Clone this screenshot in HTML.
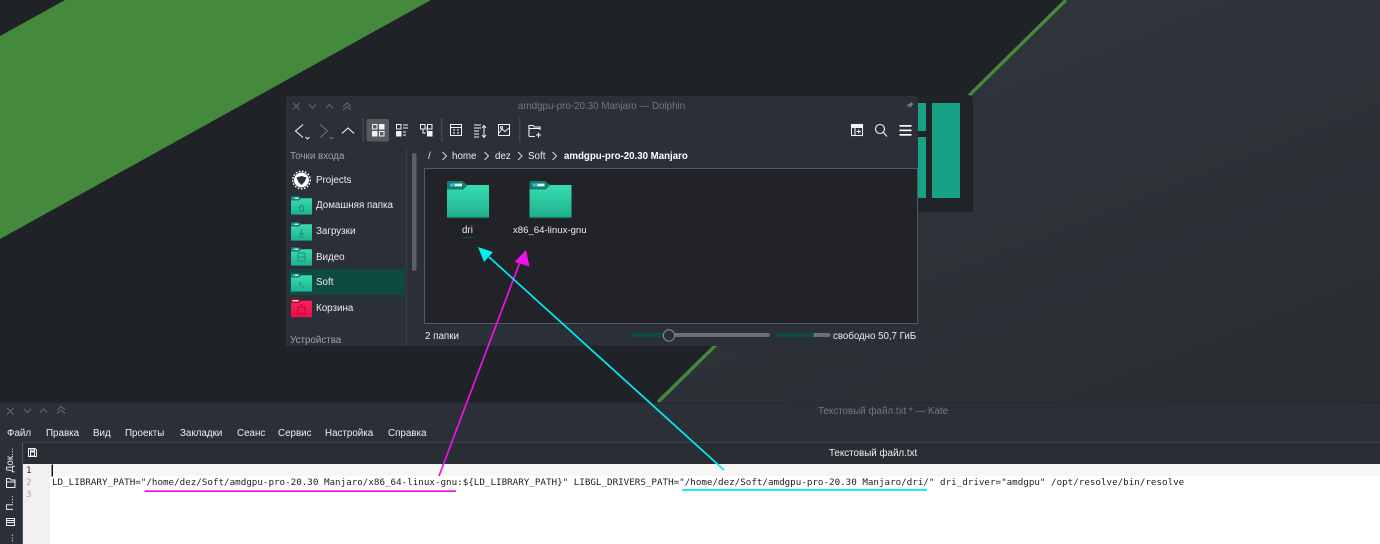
<!DOCTYPE html>
<html lang="ru"><head><meta charset="utf-8"><title>Dolphin и Kate</title>
<style>
html,body{margin:0;padding:0;background:#1f2227}
#r{position:relative;width:1380px;height:544px;overflow:hidden;font-family:"Liberation Sans","DejaVu Sans",sans-serif;font-size:9.800px;color:#eceef0}
#r div,#r span.t{position:absolute}
.t{white-space:nowrap;line-height:12px;transform:translateY(-5px)}
svg{position:absolute;left:0;top:0}
.g{color:#a0a3a6}
.d{color:#74787c}
</style></head><body><div id="r">
<svg width="1380" height="544" viewBox="0 0 1380 544">
<defs>
<linearGradient id="bg" x1="0" y1="0" x2="1" y2="1"><stop offset="0" stop-color="#323740"/><stop offset=".55" stop-color="#2e3238"/><stop offset="1" stop-color="#282b2e"/></linearGradient>
<linearGradient id="ff" x1="0" y1="0" x2="0" y2="1"><stop offset="0" stop-color="#38dcb0"/><stop offset="1" stop-color="#1fb08f"/></linearGradient>
<linearGradient id="fr" x1="0" y1="0" x2="0" y2="1"><stop offset="0" stop-color="#ff2058"/><stop offset="1" stop-color="#e8104a"/></linearGradient>
<symbol id="fold" viewBox="0 0 42 37">
<path d="M0 1Q0 0 1 0H15.500L20.500 4L16 8.500H0Z" fill="#13806e"/>
<rect x="3" y="2.600" width="12" height="2.800" fill="#e8f8f6"/><rect x="3" y="2.600" width="5" height="2.800" fill="#35b5e8"/>
<path d="M0 8.500H16L20.500 4H42V37H0Z" fill="url(#ff)"/>
<rect x="0" y="35.800" width="42" height="1.200" fill="#13806e"/>
</symbol>
<symbol id="foldr" viewBox="0 0 42 37">
<path d="M0 1Q0 0 1 0H15.500L20.500 4L16 8.500H0Z" fill="#a80c36"/>
<rect x="3" y="2.600" width="12" height="2.800" fill="#f8e8ea"/>
<path d="M0 8.500H16L20.500 4H42V37H0Z" fill="url(#fr)"/>
</symbol>
</defs>
<!-- wallpaper -->
<rect width="1380" height="544" fill="#1f2227"/>
<path d="M0 36L65 0H431L0 239Z" fill="#458a3c"/>
<path d="M1067 0H1380V544H0V403H658Z" fill="url(#bg)"/>
<path d="M1066 0L658 402" stroke="#458a3c" stroke-width="3.400" fill="none"/>
<!-- Manjaro logo -->
<path d="M900 95H968Q973 95 973 100V212H900Z" fill="#202327"/>
<rect x="905" y="103" width="21" height="28" fill="#17a185"/>
<rect x="905" y="137" width="21" height="61" fill="#17a185"/>
<rect x="932" y="103" width="28" height="95" fill="#17a185"/>
<!-- Dolphin window -->
<path d="M286 99Q286 96 289 96H915Q918 96 918 99V346H286Z" fill="#2b2f37"/>
<g fill="none" stroke="#64686d" stroke-width="1.100">
<path d="M293 103L299.500 109.500M299.500 103L293 109.500"/>
<path d="M309 104.500L312.500 108L316 104.500"/>
<path d="M326 108L329.500 104.500L333 108"/>
<path d="M343 106.500L347 103L351 106.500M343 110L347 106.500L351 110"/>
</g>
<path d="M911 102L913.600 104.400L911.800 105.400L910.600 108L908.600 106L906 108.600L908 105.600L906.800 104.400L909.400 104Z" fill="#74787c"/>
<!-- toolbar -->
<g fill="none" stroke="#eef0f1" stroke-width="1.100">
<path d="M303 124.500L295.500 131L303 137.500"/>
<path d="M342 133.500L348 128L354 133.500"/>
</g>
<path d="M320 124.500L327.500 131L320 137.500" fill="none" stroke="#6e7276" stroke-width="1.100"/>
<path d="M305.500 137L307.500 139L309.500 137" fill="none" stroke="#eef0f1"/>
<path d="M329.500 137L331.500 139L333.500 137" fill="none" stroke="#6e7276"/>
<rect x="362.500" y="118" width="1.500" height="24" fill="#43474c"/>
<rect x="366.500" y="119" width="22.500" height="22.500" rx="2" fill="#575a5f"/>
<g fill="none" stroke="#f2f3f4" stroke-width="1">
<rect x="372.500" y="124.500" width="4.500" height="4.500"/>
<rect x="379.500" y="131.500" width="4.500" height="4.500"/>
<rect x="396.500" y="124.500" width="4.500" height="4.500"/>
<rect x="420.500" y="124.500" width="4.500" height="4.500"/><rect x="427.500" y="124.500" width="4.500" height="4.500"/>
<path d="M403 125H408M403 128H408M403 132H406M403 135H406"/>
<path d="M423 129.500V133H426M427 127V131"/>
</g>
<g fill="#f2f3f4">
<rect x="379" y="124" width="5.500" height="5.500"/><rect x="372" y="131" width="5.500" height="5.500"/>
<rect x="396" y="131" width="5.500" height="5.500"/><rect x="427" y="131" width="5.500" height="5.500"/>
</g>
<rect x="441" y="118" width="1.500" height="24" fill="#43474c"/>
<g fill="none" stroke="#f2f3f4" stroke-width="1">
<rect x="450.500" y="124.500" width="11" height="11"/>
<path d="M451 127.500H461M453 130H455M457 130H459M453 133H455M457 133H459"/>
<path d="M474 125H481M474 128H481M474 131H479M474 134H479M474 137H479M484 126V137M482 135L484 137.500L486 135M482 128L484 125.500L486 128"/>
<rect x="498.500" y="124.500" width="11" height="11"/>
<path d="M499 133L502 129L505 131.500L509 128"/><circle cx="501.500" cy="127.500" r="1"/>
</g>
<rect x="519" y="118" width="1.500" height="24" fill="#43474c"/>
<g fill="none" stroke="#f2f3f4" stroke-width="1.100">
<path d="M529 136.500V125.500H533L534.500 127H540V130M529 128.500H540M535 136.500H529"/>
<path d="M536 135H541M538.500 132.500V137.500"/>
<rect x="851.500" y="124.500" width="11" height="11"/>
<path d="M851 127.500H863M855 128V136M856.500 131.500H861M858.700 129.500V133.500"/>
<circle cx="880" cy="129" r="4.500"/><path d="M883.500 132.500L887 136.500"/>
</g>
<rect x="851" y="124" width="12" height="3" fill="#f2f3f4"/>
<rect x="899.500" y="125" width="12" height="1.700" fill="#fff"/><rect x="899.500" y="129.500" width="12" height="1.700" fill="#fff"/><rect x="899.500" y="134" width="12" height="1.700" fill="#fff"/>
<!-- sidebar -->
<rect x="406" y="148" width="1" height="198" fill="#3b3f45"/>
<rect x="412" y="153" width="4.500" height="118" rx="2.200" fill="#5d6065"/>
<rect x="289" y="269" width="116" height="26" fill="#0f4a40"/>
<circle cx="301.500" cy="180" r="7.500" fill="#fff"/>
<circle cx="301.500" cy="180" r="8.800" fill="none" stroke="#fff" stroke-width="1.400" stroke-dasharray="1.600 1.600"/>
<path d="M296.500 177.500L301.500 176L306.500 177.500L304.500 182L301.500 185L298.500 182Z" fill="#2b2f37"/>
<use href="#fold" x="291" y="196" width="21" height="19"/>
<use href="#fold" x="291" y="222" width="21" height="19"/>
<use href="#fold" x="291" y="247" width="21" height="19"/>
<use href="#fold" x="291" y="273" width="21" height="19"/>
<use href="#foldr" x="291" y="298.500" width="21" height="19"/>
<g fill="none" stroke="#15917a" stroke-width="1">
<path d="M298.500 208L301.500 205L304.500 208M299.500 207.500V211H303.500V207.500"/>
<path d="M301.500 229V235M299.500 233L301.500 235L303.500 233M298 237H305"/>
<rect x="298" y="253" width="7" height="8"/><path d="M298 257H305"/>
<path d="M299 282L301 284L299 286M302 287H304"/>
</g>
<g fill="none" stroke="#b00c3c" stroke-width="1"><rect x="298" y="307" width="7" height="7"/><path d="M297 307H306M300 305H303"/></g>
<!-- main view -->
<rect x="424.500" y="168.500" width="493" height="155" fill="#212329" stroke="#56595d"/>
<use href="#fold" x="447" y="181" width="42" height="37"/>
<use href="#fold" x="529.500" y="181" width="42" height="37"/>
<rect x="461" y="237" width="13.500" height="1" fill="#0f4a40"/>
<!-- breadcrumb -->
<g fill="none" stroke="#d8dadc" stroke-width="1">
<path d="M442.500 152L446.500 156L442.500 160M484.500 152L488.500 156L484.500 160M518 152L522 156L518 160M552.500 152L556.500 156L552.500 160"/>
</g>
<!-- status -->
<rect x="631" y="333" width="139" height="4" rx="2" fill="#6e7074"/>
<rect x="631" y="333" width="36" height="4" rx="2" fill="#0f4a40"/>
<circle cx="669" cy="335.500" r="5.700" fill="#2b2f37" stroke="#85888b" stroke-width="1.100"/>
<rect x="776" y="333" width="54.500" height="4" rx="2" fill="#6e7074"/>
<rect x="776" y="333" width="38" height="4" rx="2" fill="#0f4a40"/>
<!-- Kate window -->
<rect x="0" y="403" width="1380" height="141" fill="#2b2f37"/>
<rect x="0" y="402.500" width="1380" height="1" fill="#25282d"/>
<g fill="none" stroke="#64686d" stroke-width="1.100">
<path d="M7 408L13.500 414.500M13.500 408L7 414.500"/>
<path d="M24 409L27.500 412.500L31 409"/>
<path d="M40 412.500L43.500 409L47 412.500"/>
<path d="M57 410L61 406.500L65 410M57 413.500L61 410L65 413.500"/>
</g>
<rect x="22" y="442.500" width="1358" height="1" fill="#53565b"/>
<rect x="22" y="443" width="1358" height="21" fill="#2a2d33"/>
<rect x="22" y="443" width="1" height="101" fill="#53565b"/>
<g fill="none" stroke="#f0f1f2" stroke-width="1">
<path d="M28.500 448.500H35L36.500 450V456.500H28.500Z"/><rect x="30.500" y="452" width="4" height="4"/><rect x="30.500" y="449" width="4" height="2"/>
<rect x="6.500" y="518.500" width="8" height="7"/><path d="M7 520.500H14M7 522.500H14"/>
<path d="M6.500 487.500V478.500H10L11 480H15V487.500Z"/><path d="M7 482H15"/>
</g>
<rect x="23" y="464" width="1357" height="80" fill="#fff"/>
<rect x="23" y="464" width="1357" height="12" fill="#f7f6f4"/>
<rect x="23" y="464" width="27" height="80" fill="#f2f1ef"/>
<rect x="50" y="476" width="1330" height="12" fill="#fff"/>
<rect x="51.500" y="464.500" width="1.500" height="12" fill="#111"/>
<!-- annotations -->
<rect x="144.500" y="490.300" width="311.500" height="1.700" fill="#f010e8"/>
<rect x="682" y="489" width="245" height="1.800" fill="#00f0f0"/>
<path d="M439 476L520 262" stroke="#f010e8" stroke-width="1.700" fill="none"/>
<path d="M526 250L529.500 266.500L514.500 262Z" fill="#f010e8"/>
<path d="M724 470L489 257" stroke="#00eef0" stroke-width="1.700" fill="none"/>
<path d="M478 247L493 252L484 262Z" fill="#00eef0"/>
</svg>

<span class="t d" style="left:518px;top:106px">amdgpu-pro-20.30 Manjaro — Dolphin</span>
<span class="t g" style="left:290px;top:156px">Точки входа</span>
<span class="t" style="left:316px;top:180px">Projects</span>
<span class="t" style="left:316px;top:205px">Домашняя папка</span>
<span class="t" style="left:316px;top:231px">Загрузки</span>
<span class="t" style="left:316px;top:257px">Видео</span>
<span class="t" style="left:316px;top:282px">Soft</span>
<span class="t" style="left:316px;top:308px">Корзина</span>
<span class="t g" style="left:290px;top:340px">Устройства</span>
<span class="t" style="left:428px;top:156px">/</span>
<span class="t" style="left:452px;top:156px">home</span>
<span class="t" style="left:495px;top:156px">dez</span>
<span class="t" style="left:528px;top:156px">Soft</span>
<span class="t" style="left:564px;top:156px;font-weight:bold;color:#fff;font-size:9.700px">amdgpu-pro-20.30 Manjaro</span>
<span class="t" style="left:462px;top:230px">dri</span>
<span class="t" style="left:513px;top:230px;font-size:9.600px">x86_64-linux-gnu</span>
<span class="t" style="left:425px;top:336px">2 папки</span>
<span class="t" style="left:833px;top:336px;font-size:9.700px">свободно 50,7 ГиБ</span>

<span class="t d" style="left:818px;top:411px">Текстовый файл.txt * — Kate</span>
<span class="t" style="left:7px;top:432.500px">Файл</span>
<span class="t" style="left:46px;top:432.500px">Правка</span>
<span class="t" style="left:93px;top:432.500px">Вид</span>
<span class="t" style="left:125px;top:432.500px">Проекты</span>
<span class="t" style="left:180px;top:432.500px">Закладки</span>
<span class="t" style="left:237px;top:432.500px">Сеанс</span>
<span class="t" style="left:278px;top:432.500px">Сервис</span>
<span class="t" style="left:325px;top:432.500px">Настройка</span>
<span class="t" style="left:388px;top:432.500px">Справка</span>
<span class="t" style="left:829px;top:453px;color:#f0f1f2">Текстовый файл.txt</span>
<span class="t" style="left:-4px;top:460px;width:30px;text-align:center;transform:translateY(-6px) rotate(-90deg)">Док...</span>
<span class="t" style="left:-4px;top:503px;width:30px;text-align:center;transform:translateY(-6px) rotate(-90deg)">П...</span>
<span class="t" style="left:-4px;top:538px;width:30px;text-align:center;transform:translateY(-6px) rotate(-90deg)">...</span>

<span class="t" style="left:26px;top:470px;color:#333;font-family:'DejaVu Sans Mono',monospace;font-size:9.200px">1</span>
<span class="t" style="left:26px;top:482px;color:#aaa;font-family:'DejaVu Sans Mono',monospace;font-size:9.200px">2</span>
<span class="t" style="left:26px;top:494px;color:#aaa;font-family:'DejaVu Sans Mono',monospace;font-size:9.200px">3</span>
<span class="t" style="left:52px;top:482px;font-family:'DejaVu Sans Mono','Liberation Mono',monospace;font-size:9.220px;color:#222;white-space:pre">LD_LIBRARY_PATH="/home/dez/Soft/amdgpu-pro-20.30 Manjaro/x86_64-linux-gnu:${LD_LIBRARY_PATH}" LIBGL_DRIVERS_PATH="/home/dez/Soft/amdgpu-pro-20.30 Manjaro/dri/" dri_driver="amdgpu" /opt/resolve/bin/resolve</span>
</div></body></html>
